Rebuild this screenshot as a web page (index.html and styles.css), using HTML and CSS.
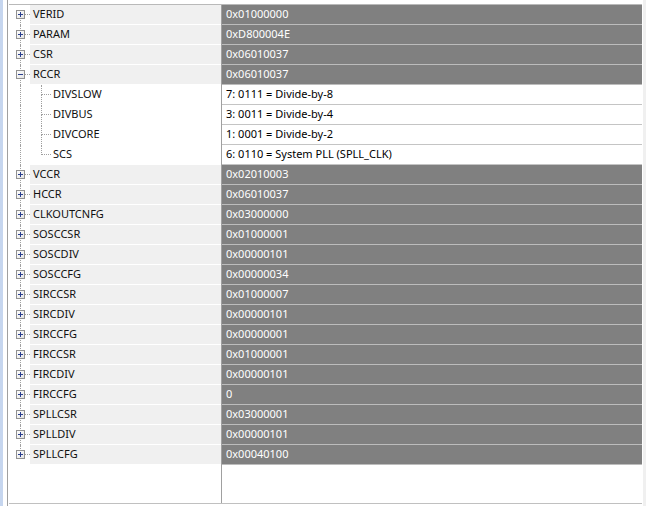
FILE: index.html
```html
<!DOCTYPE html>
<html lang="en">
<head>
    <meta charset="UTF-8">
    <title>Register view</title>
    <link rel="stylesheet" href="styles.css">
</head>
<body>
    <div class="window">
        <div class="edge"></div>
        <div class="panel">
            <div class="grid">
                <div class="row group first">
                    <div class="name"><span class="tree"><svg class="box" width="9" height="9"><use href="#plus"/></svg></span><span class="label">VERID</span></div>
                    <div class="value">0x01000000</div>
                </div>
                <div class="row group">
                    <div class="name"><span class="tree"><svg class="box" width="9" height="9"><use href="#plus"/></svg></span><span class="label">PARAM</span></div>
                    <div class="value">0xD800004E</div>
                </div>
                <div class="row group">
                    <div class="name"><span class="tree"><svg class="box" width="9" height="9"><use href="#plus"/></svg></span><span class="label">CSR</span></div>
                    <div class="value">0x06010037</div>
                </div>
                <div class="row group">
                    <div class="name"><span class="tree"><svg class="box" width="9" height="9"><use href="#minus"/></svg></span><span class="label">RCCR</span></div>
                    <div class="value">0x06010037</div>
                </div>
                <div class="row field">
                    <div class="name"><span class="tree"></span><span class="label">DIVSLOW</span></div>
                    <div class="value">7: 0111 = Divide-by-8</div>
                </div>
                <div class="row field">
                    <div class="name"><span class="tree"></span><span class="label">DIVBUS</span></div>
                    <div class="value">3: 0011 = Divide-by-4</div>
                </div>
                <div class="row field">
                    <div class="name"><span class="tree"></span><span class="label">DIVCORE</span></div>
                    <div class="value">1: 0001 = Divide-by-2</div>
                </div>
                <div class="row field last-field">
                    <div class="name"><span class="tree"></span><span class="label">SCS</span></div>
                    <div class="value">6: 0110 = System PLL (SPLL_CLK)</div>
                </div>
                <div class="row group">
                    <div class="name"><span class="tree"><svg class="box" width="9" height="9"><use href="#plus"/></svg></span><span class="label">VCCR</span></div>
                    <div class="value">0x02010003</div>
                </div>
                <div class="row group">
                    <div class="name"><span class="tree"><svg class="box" width="9" height="9"><use href="#plus"/></svg></span><span class="label">HCCR</span></div>
                    <div class="value">0x06010037</div>
                </div>
                <div class="row group">
                    <div class="name"><span class="tree"><svg class="box" width="9" height="9"><use href="#plus"/></svg></span><span class="label">CLKOUTCNFG</span></div>
                    <div class="value">0x03000000</div>
                </div>
                <div class="row group">
                    <div class="name"><span class="tree"><svg class="box" width="9" height="9"><use href="#plus"/></svg></span><span class="label">SOSCCSR</span></div>
                    <div class="value">0x01000001</div>
                </div>
                <div class="row group">
                    <div class="name"><span class="tree"><svg class="box" width="9" height="9"><use href="#plus"/></svg></span><span class="label">SOSCDIV</span></div>
                    <div class="value">0x00000101</div>
                </div>
                <div class="row group">
                    <div class="name"><span class="tree"><svg class="box" width="9" height="9"><use href="#plus"/></svg></span><span class="label">SOSCCFG</span></div>
                    <div class="value">0x00000034</div>
                </div>
                <div class="row group">
                    <div class="name"><span class="tree"><svg class="box" width="9" height="9"><use href="#plus"/></svg></span><span class="label">SIRCCSR</span></div>
                    <div class="value">0x01000007</div>
                </div>
                <div class="row group">
                    <div class="name"><span class="tree"><svg class="box" width="9" height="9"><use href="#plus"/></svg></span><span class="label">SIRCDIV</span></div>
                    <div class="value">0x00000101</div>
                </div>
                <div class="row group">
                    <div class="name"><span class="tree"><svg class="box" width="9" height="9"><use href="#plus"/></svg></span><span class="label">SIRCCFG</span></div>
                    <div class="value">0x00000001</div>
                </div>
                <div class="row group">
                    <div class="name"><span class="tree"><svg class="box" width="9" height="9"><use href="#plus"/></svg></span><span class="label">FIRCCSR</span></div>
                    <div class="value">0x01000001</div>
                </div>
                <div class="row group">
                    <div class="name"><span class="tree"><svg class="box" width="9" height="9"><use href="#plus"/></svg></span><span class="label">FIRCDIV</span></div>
                    <div class="value">0x00000101</div>
                </div>
                <div class="row group">
                    <div class="name"><span class="tree"><svg class="box" width="9" height="9"><use href="#plus"/></svg></span><span class="label">FIRCCFG</span></div>
                    <div class="value">0</div>
                </div>
                <div class="row group">
                    <div class="name"><span class="tree"><svg class="box" width="9" height="9"><use href="#plus"/></svg></span><span class="label">SPLLCSR</span></div>
                    <div class="value">0x03000001</div>
                </div>
                <div class="row group">
                    <div class="name"><span class="tree"><svg class="box" width="9" height="9"><use href="#plus"/></svg></span><span class="label">SPLLDIV</span></div>
                    <div class="value">0x00000101</div>
                </div>
                <div class="row group last">
                    <div class="name"><span class="tree"><svg class="box" width="9" height="9"><use href="#plus"/></svg></span><span class="label">SPLLCFG</span></div>
                    <div class="value">0x00040100</div>
                </div>
            </div>
            <div class="filler">
                <div class="filler-name"></div>
                <div class="filler-value"></div>
            </div>
        </div>
        <div class="side"></div>
    </div>

    <!-- expander glyphs -->
    <svg width="0" height="0" class="defs">
        <defs>
            <linearGradient id="boxfill" x1="0" y1="0" x2="1" y2="1">
                <stop offset="0" stop-color="#ffffff"/>
                <stop offset="1" stop-color="#e2e2e2"/>
            </linearGradient>
            <g id="plus">
                <rect x="0.5" y="0.5" width="8" height="8" fill="url(#boxfill)" stroke="#919191"/>
                <path d="M2 4.5h5M4.5 2v5" stroke="#2a3f8f" stroke-width="1"/>
            </g>
            <g id="minus">
                <rect x="0.5" y="0.5" width="8" height="8" fill="url(#boxfill)" stroke="#919191"/>
                <path d="M2 4.5h5" stroke="#2a3f8f" stroke-width="1"/>
            </g>
        </defs>
    </svg>
</body>
</html>
```

FILE: styles.css
```css
body {
    margin: 0;
    padding: 0;
    font-family: "Noto Sans", sans-serif;
    font-size: 11px;
    background: #ffffff;
}
.defs {
    position: absolute;
}
.window {
    display: flex;
    height: 506px;
    width: 646px;
}
.edge {
    width: 3px;
    background: #c6d6ef;
}
.panel {
    display: flex;
    flex-direction: column;
    margin-left: 4px;
    border-left: 1px solid #a0a0a0;
    padding: 4px 0 2px 1px;
    width: 635px;
}
.side {
    width: 3px;
    background: #f0f0f0;
    border-left: 1px solid #ffffff;
}
.grid {
    border-top: 1px solid #b9b9b9;
}
.row {
    display: flex;
    height: 20px;
}
.name {
    display: flex;
    width: 212px;
    border-right: 1px solid #a0a0a0;
}
.tree {
    position: relative;
    width: 21px;
    height: 20px;
    flex-shrink: 0;
}
.field .tree {
    width: 41px;
}
.label {
    flex: 1;
    height: 19px;
    line-height: 18px;
    padding-left: 3px;
    background: #f0f0f0;
    border-bottom: 1px solid #ffffff;
    color: #101010;
    white-space: nowrap;
}
.field .label {
    background: #ffffff;
}
.value {
    flex: 1;
    height: 19px;
    line-height: 18px;
    padding-left: 4px;
    background: #808080;
    color: #ffffff;
    border-bottom: 1px solid #bcbcbc;
    white-space: nowrap;
}
.field .value {
    background: #ffffff;
    color: #000000;
    border-bottom-color: #c4c4c4;
}

/* tree lines */
.tree::before,
.tree::after {
    content: "";
    position: absolute;
}
.tree::before {
    left: 11px;
    top: 0;
    height: 20px;
    border-left: 1px dotted #a0a0a0;
}
.first .tree::before {
    top: 9px;
    height: 11px;
}
.last .tree::before {
    height: 10px;
}
.group .tree::after {
    left: 16px;
    top: 9px;
    width: 5px;
    border-top: 1px dotted #a0a0a0;
}
.field .tree::after {
    left: 32px;
    top: 0;
    width: 9px;
    height: 9px;
    border-left: 1px dotted #a0a0a0;
    border-bottom: 1px dotted #a0a0a0;
}
.field .tree {
    background: repeating-linear-gradient(#a0a0a0 0 1px, transparent 1px 2px) 32px 10px / 1px 10px no-repeat;
}
.last-field .tree {
    background: none;
}
.box {
    position: absolute;
    left: 7px;
    top: 5px;
    display: block;
}
.filler {
    flex: 1;
    display: flex;
    border-bottom: 1px solid #c0c0c0;
}
.filler-name {
    width: 212px;
    border-right: 1px solid #a0a0a0;
}
.filler-value {
    flex: 1;
}
```
